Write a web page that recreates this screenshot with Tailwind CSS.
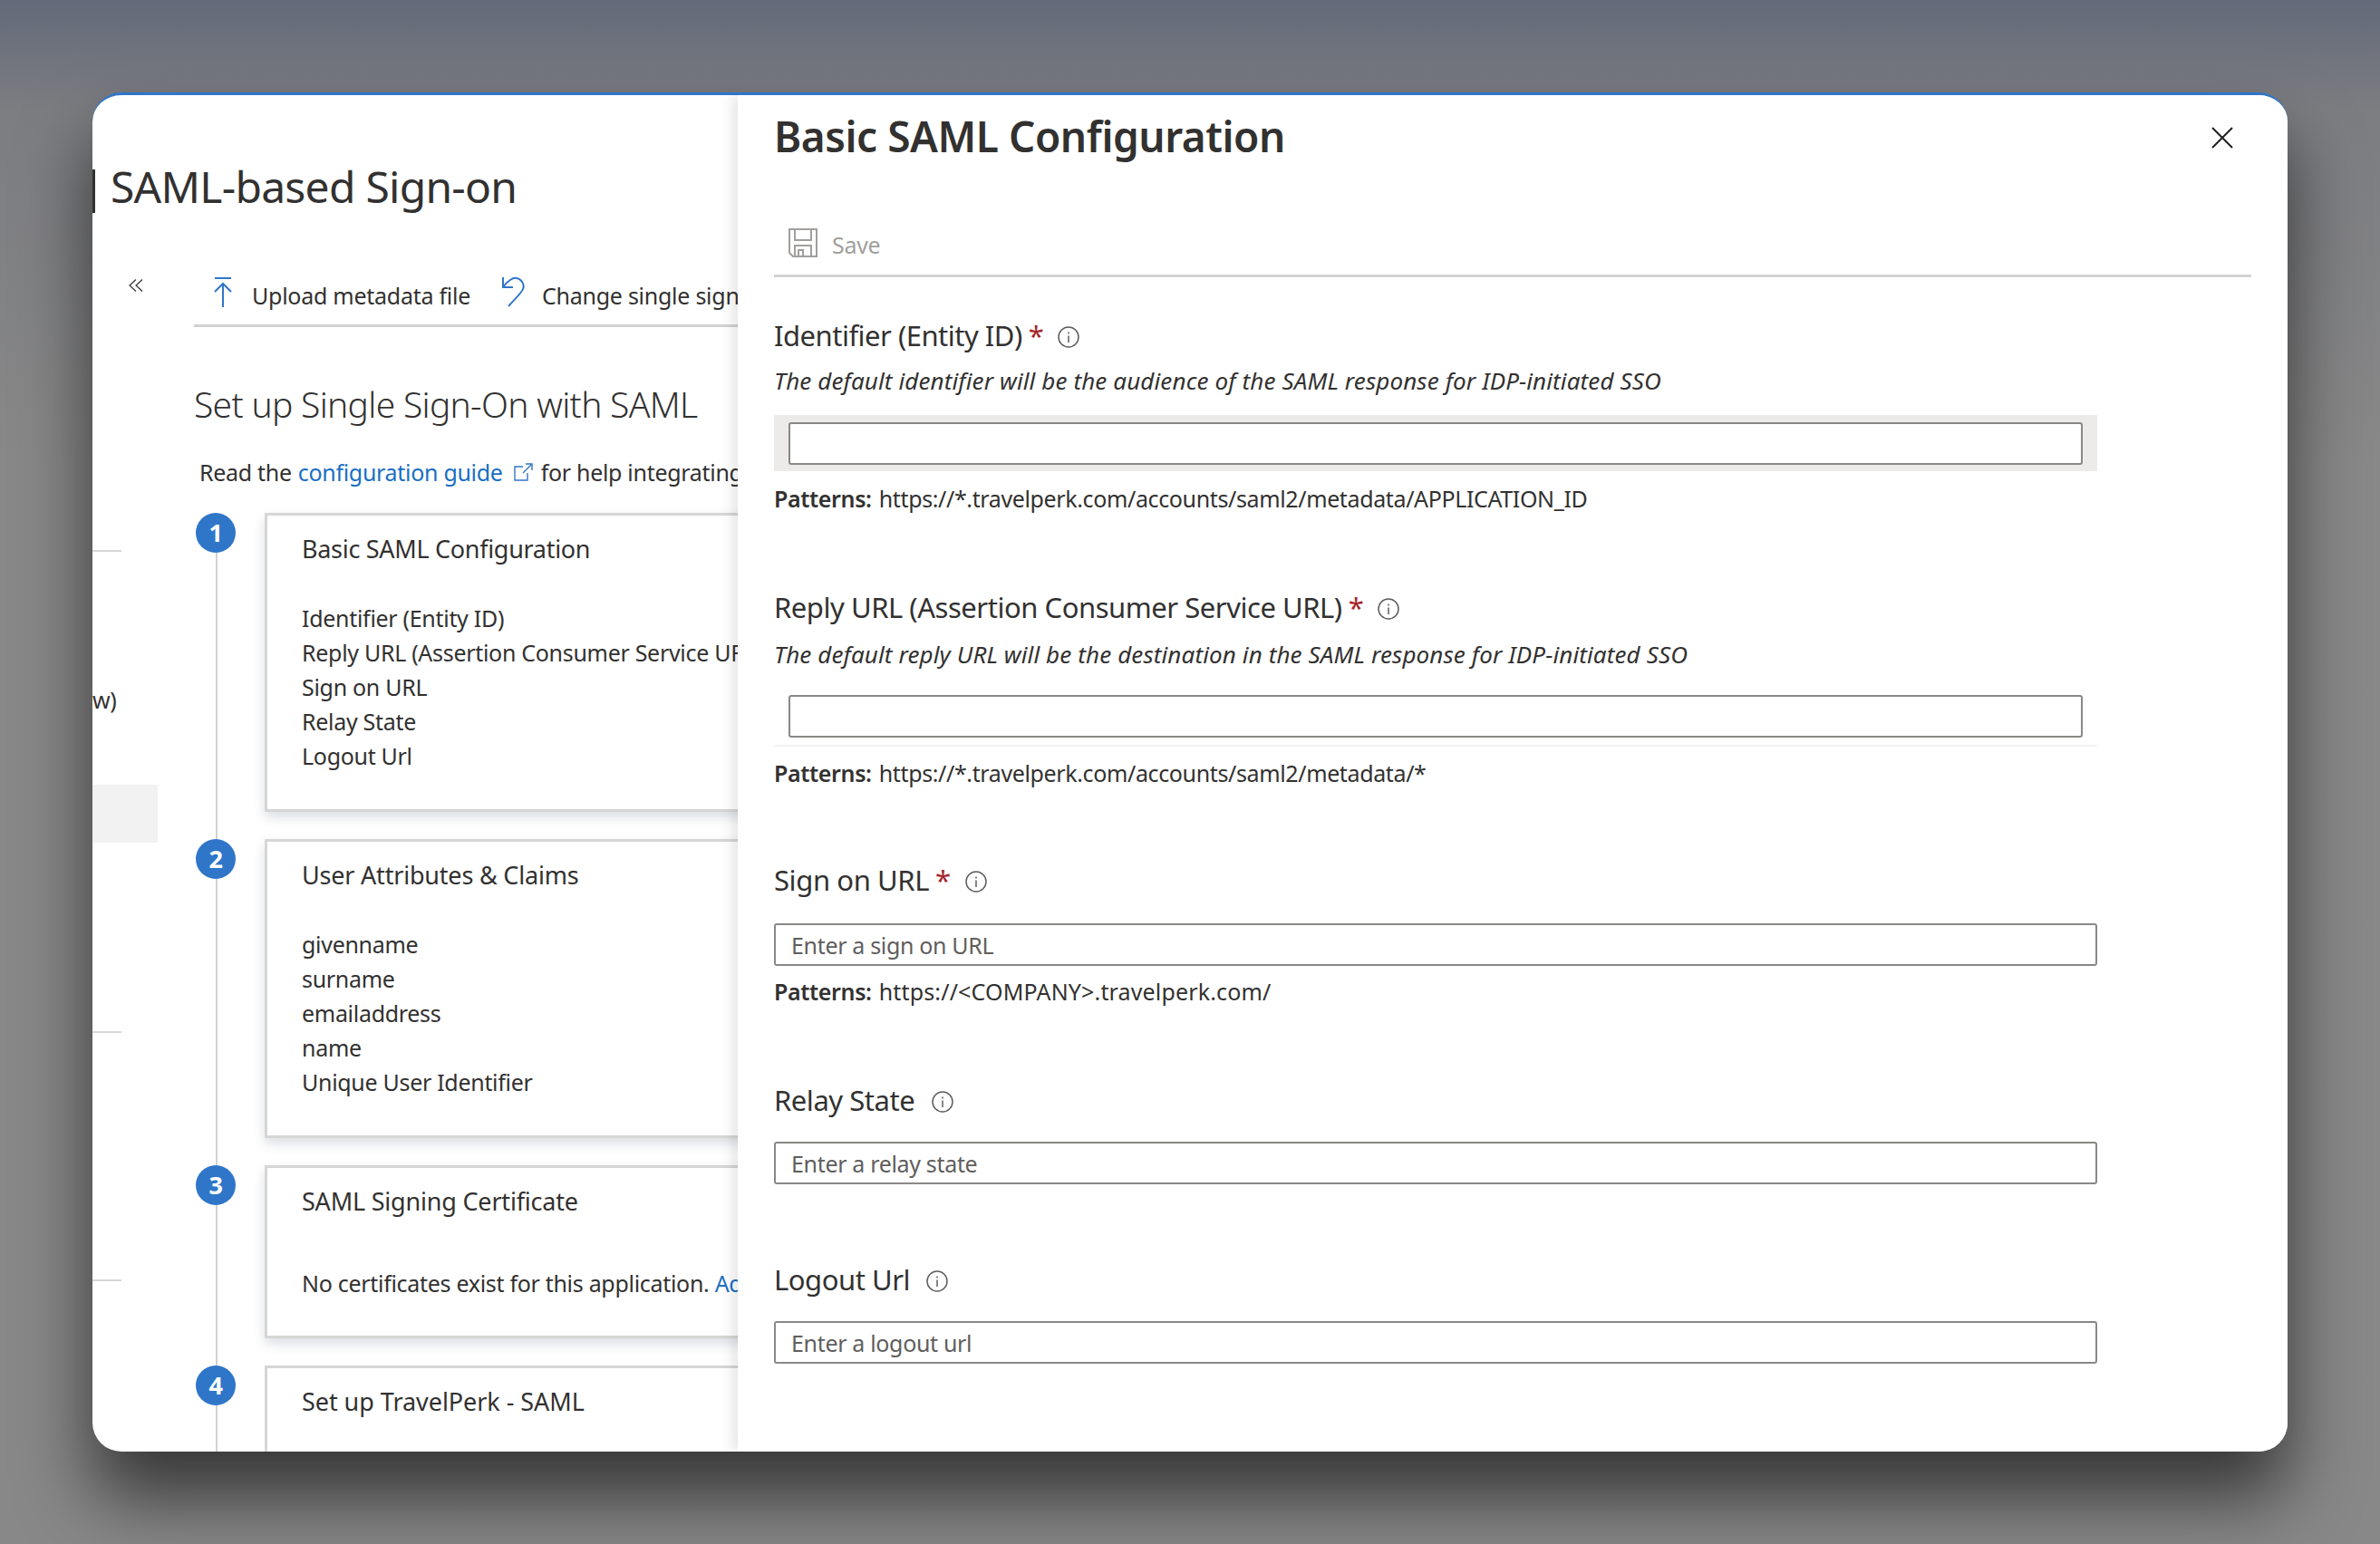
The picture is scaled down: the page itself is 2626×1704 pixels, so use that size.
<!DOCTYPE html>
<html lang="en">
<head>
  <meta charset="UTF-8">
  <title>Basic SAML Configuration</title>
  <script src="https://cdn.jsdelivr.net/npm/@tailwindcss/browser@4"></script>
</head>
<body class="m-0 font-['Noto_Sans',sans-serif] text-[#323130]">
  <div class="h-[1704px] w-[2626px] overflow-hidden bg-linear-to-b from-[#646a7a] from-0% via-[#7c7d81] via-[7%] to-[#888888] to-[30%] pl-[102px] pt-[102px]">
    <div class="flex h-[1500px] w-[2422px] overflow-hidden rounded-[32px] border-t-[3px] border-[#2f76c9] bg-white shadow-[0_50px_80px_rgba(0,0,0,0.6)]">

      <!-- left blade, runs under the right one -->
      <div class="w-[712px] shrink-0 overflow-hidden">
        <div class="flex h-[133px] items-start pt-[82px]">
          <div class="h-12 w-[3px] shrink-0 bg-[#323130]"></div>
          <h1 class="ml-[17px] -mt-[13px] text-[48px] leading-[64px] tracking-[-0.75px] font-normal whitespace-nowrap">SAML-based Sign-on</h1>
        </div>
        <div class="flex">
          <!-- sidebar leftovers -->
          <div class="w-[112px] shrink-0">
            <div class="flex h-[82px] items-start justify-end pr-[56px] pt-[70px]">
              <svg class="shrink-0" width="16" height="14" viewBox="0 0 16 14" fill="none" stroke="#323130" stroke-width="1.2"><path d="M8 0.5 1 7l7 6.5M15 0.5 8 7l7 6.5"/></svg>
            </div>
            <div class="mt-[287px] h-[2px] w-[32px] bg-[#d6d6d6]"></div>
            <div class="mt-[145px] text-[25px] leading-[36px] tracking-[-0.3px]">w)</div>
            <div class="mt-[76px] h-[64px] w-[72px] bg-[#f2f2f2]"></div>
            <div class="mt-[208px] h-[2px] w-[32px] bg-[#d6d6d6]"></div>
            <div class="mt-[272px] h-[2px] w-[32px] bg-[#d6d6d6]"></div>
          </div>

          <div class="w-[600px] shrink-0 pt-[54px]">
            <!-- toolbar -->
            <div class="flex h-[69px] w-[640px] items-start border-b-[3px] border-[#d2d2d2] pl-[22px] pt-[14px] text-[25px] leading-[40px] tracking-[-0.26px] whitespace-nowrap">
              <svg class="mt-[-1px] shrink-0" width="20" height="34" viewBox="0 0 20 34" fill="none" stroke="#2f76c9" stroke-width="2"><path d="M1 2h18M10 34V8M1 17l9-9 9 9"/></svg>
              <span class="ml-[22px]">Upload metadata file</span>
              <svg class="ml-[34px] mt-[-1px] shrink-0" width="26" height="34" viewBox="0 0 26 34" fill="none" stroke="#2f76c9" stroke-width="2"><path d="M2 1v11h11M2 12C7 5 13 1 17 2c6 1 9 8 7 12-2 5-9 11-16 19"/></svg>
              <span class="ml-[19px]">Change single sign</span>
            </div>
            <h2 class="mt-[55px] text-[39px] leading-[60px] tracking-[-0.7px] font-light whitespace-nowrap">Set up Single Sign-On with SAML</h2>
            <div class="mt-[26px] flex w-[700px] items-center pl-[6px] text-[25px] leading-[38px] tracking-[-0.3px] whitespace-nowrap">
              <span>Read the</span>
              <span class="ml-[7px] text-[#1a6fc4]">configuration guide</span>
              <svg class="ml-[11px] shrink-0" width="22" height="20" viewBox="0 0 22 20" fill="none" stroke="#2f76c9" stroke-width="1.4"><path d="M11 4H2v15h14v-8M11 11 20 2M14 1h7v7"/></svg>
              <span class="ml-[9px]">for help integrating</span>
            </div>

            <!-- steps -->
            <div class="relative mt-[26px] flex flex-col gap-[30px] text-[25px] leading-[38px] tracking-[-0.3px]">
              <div class="absolute left-[24px] top-[10px] h-[1100px] w-[2px] bg-[#d2d2d2]"></div>
              <div class="relative flex items-start">
                <div class="ml-[2px] flex h-[44px] w-[44px] shrink-0 items-center justify-center rounded-full bg-[#2f76c9] text-[27px] font-bold text-white">1</div>
                <div class="ml-[32px] h-[330px] w-[560px] shrink-0 border-[3px] border-[#d6d6d6] bg-white pl-[38px] pt-[18px] whitespace-nowrap shadow-[0_6px_12px_rgba(60,70,100,0.18)]">
                  <div class="text-[27px] tracking-[-0.3px]">Basic SAML Configuration</div>
                  <div class="mt-[38px]">Identifier (Entity ID)</div>
                  <div>Reply URL (Assertion Consumer Service URL)</div>
                  <div>Sign on URL</div>
                  <div>Relay State</div>
                  <div>Logout Url</div>
                </div>
              </div>
              <div class="relative flex items-start">
                <div class="ml-[2px] flex h-[44px] w-[44px] shrink-0 items-center justify-center rounded-full bg-[#2f76c9] text-[27px] font-bold text-white">2</div>
                <div class="ml-[32px] h-[330px] w-[560px] shrink-0 border-[3px] border-[#d6d6d6] bg-white pl-[38px] pt-[18px] whitespace-nowrap shadow-[0_6px_12px_rgba(60,70,100,0.18)]">
                  <div class="text-[27px] tracking-[-0.2px]">User Attributes &amp; Claims</div>
                  <div class="mt-[38px]">givenname</div>
                  <div>surname</div>
                  <div>emailaddress</div>
                  <div>name</div>
                  <div>Unique User Identifier</div>
                </div>
              </div>
              <div class="relative flex items-start">
                <div class="ml-[2px] flex h-[44px] w-[44px] shrink-0 items-center justify-center rounded-full bg-[#2f76c9] text-[27px] font-bold text-white">3</div>
                <div class="ml-[32px] h-[191px] w-[560px] shrink-0 border-[3px] border-[#d6d6d6] bg-white pl-[38px] pt-[18px] whitespace-nowrap shadow-[0_6px_12px_rgba(60,70,100,0.18)]">
                  <div class="text-[27px] tracking-[-0.2px]">SAML Signing Certificate</div>
                  <div class="mt-[52px]">No certificates exist for this application. <span class="text-[#1a6fc4]">Add</span></div>
                </div>
              </div>
              <div class="relative flex items-start">
                <div class="ml-[2px] flex h-[44px] w-[44px] shrink-0 items-center justify-center rounded-full bg-[#2f76c9] text-[27px] font-bold text-white">4</div>
                <div class="ml-[32px] h-[191px] w-[560px] shrink-0 border-[3px] border-[#d6d6d6] bg-white pl-[38px] pt-[18px] whitespace-nowrap">
                  <div class="text-[27px] tracking-[-0.05px]">Set up TravelPerk - SAML</div>
                </div>
              </div>
            </div>
          </div>
        </div>
      </div>

      <!-- right blade -->
      <div class="relative z-10 w-[1710px] shrink-0 bg-white pl-[40px] shadow-[-6px_0_14px_rgba(0,0,0,0.1)]">
        <div class="flex h-[95px] items-start pt-[13px]">
          <h2 class="text-[46px] leading-[64px] tracking-[-0.45px] font-semibold whitespace-nowrap">Basic SAML Configuration</h2>
          <svg class="ml-[1022px] mt-[22px] shrink-0" width="24" height="24" viewBox="0 0 24 24" fill="none" stroke="#201f1e" stroke-width="2"><path d="M1 1l22 22M23 1 1 23"/></svg>
        </div>

        <div class="flex h-[106px] w-[1630px] items-start border-b-[3px] border-[#d2d2d2] pl-[16px] pt-[52px]">
          <svg class="shrink-0" width="32" height="32" viewBox="0 0 32 32" fill="none" stroke="#a19f9d" stroke-width="2"><path d="M1 1h30v30H5l-4-4zM7 1v12h18V1M7 31V19h18v12M11 31v-7h5v7"/></svg>
          <span class="ml-[16px] text-[25px] leading-[36px] tracking-[-0.3px] text-[#a19f9d]">Save</span>
        </div>

        <!-- Identifier -->
        <div class="mt-[42px] flex h-[44px] items-center text-[31px] leading-[44px] tracking-[-0.5px] whitespace-nowrap">
          <span>Identifier (Entity ID)</span>
          <span class="ml-[7px] text-[#a4262c]">*</span>
          <svg class="ml-[16px] mt-[3px] shrink-0" width="24" height="24" viewBox="0 0 24 24" fill="none" stroke="#605e5c" stroke-width="1.5"><circle cx="12" cy="12" r="11"/><path d="M12 10.5V18M12 6.5v2"/></svg>
        </div>
        <p class="mt-[9px] text-[26px] leading-[38px] tracking-[0.12px] italic whitespace-nowrap">The default identifier will be the audience of the SAML response for IDP-initiated SSO</p>
        <div class="mt-[19px] h-[62px] w-[1460px] bg-[#ecebe9] px-[16px] py-[8px]">
          <input type="text" class="block h-[47px] w-full rounded-[3px] border-2 border-[#8a8886] bg-white px-[16px] text-[25px] outline-none">
        </div>
        <p class="mt-[11px] text-[25px] leading-[38px] tracking-[-0.37px] whitespace-nowrap"><b class="mr-[2px] font-semibold">Patterns:</b> https://*.travelperk.com/accounts/saml2/metadata/APPLICATION_ID</p>

        <!-- Reply URL -->
        <div class="mt-[79px] flex h-[44px] items-center text-[31px] leading-[44px] tracking-[-0.46px] whitespace-nowrap">
          <span>Reply URL (Assertion Consumer Service URL)</span>
          <span class="ml-[7px] text-[#a4262c]">*</span>
          <svg class="ml-[16px] mt-[3px] shrink-0" width="24" height="24" viewBox="0 0 24 24" fill="none" stroke="#605e5c" stroke-width="1.5"><circle cx="12" cy="12" r="11"/><path d="M12 10.5V18M12 6.5v2"/></svg>
        </div>
        <p class="mt-[11px] text-[26px] leading-[38px] tracking-[0.12px] italic whitespace-nowrap">The default reply URL will be the destination in the SAML response for IDP-initiated SSO</p>
        <div class="mt-[26px] h-[57px] w-[1460px] border-b-[2px] border-[#f3f2f1] px-[16px]">
          <input type="text" class="block h-[47px] w-full rounded-[3px] border-2 border-[#8a8886] bg-white px-[16px] text-[25px] outline-none">
        </div>
        <p class="mt-[10px] text-[25px] leading-[38px] tracking-[-0.37px] whitespace-nowrap"><b class="mr-[2px] font-semibold">Patterns:</b> https://*.travelperk.com/accounts/saml2/metadata/*</p>

        <!-- Sign on URL -->
        <div class="mt-[77px] flex h-[44px] items-center text-[31px] leading-[44px] tracking-[-0.4px] whitespace-nowrap">
          <span>Sign on URL</span>
          <span class="ml-[7px] text-[#a4262c]">*</span>
          <svg class="ml-[16px] mt-[3px] shrink-0" width="24" height="24" viewBox="0 0 24 24" fill="none" stroke="#605e5c" stroke-width="1.5"><circle cx="12" cy="12" r="11"/><path d="M12 10.5V18M12 6.5v2"/></svg>
        </div>
        <input type="text" placeholder="Enter a sign on URL" class="mt-[26px] block h-[47px] w-[1460px] rounded-[3px] border-2 border-[#8a8886] bg-white px-[17px] text-[25px] tracking-[-0.33px] outline-none placeholder:text-[#605e5c]">
        <p class="mt-[9px] text-[25px] leading-[38px] tracking-[-0.37px] whitespace-nowrap"><b class="mr-[2px] font-semibold">Patterns:</b> <span class="tracking-[0.15px]">https://&lt;COMPANY&gt;.travelperk.com/</span></p>

        <!-- Relay State -->
        <div class="mt-[79px] flex h-[44px] items-center text-[31px] leading-[44px] tracking-[-0.46px] whitespace-nowrap">
          <span>Relay State</span>
          <svg class="ml-[19px] mt-[3px] shrink-0" width="24" height="24" viewBox="0 0 24 24" fill="none" stroke="#605e5c" stroke-width="1.5"><circle cx="12" cy="12" r="11"/><path d="M12 10.5V18M12 6.5v2"/></svg>
        </div>
        <input type="text" placeholder="Enter a relay state" class="mt-[24px] block h-[47px] w-[1460px] rounded-[3px] border-2 border-[#8a8886] bg-white px-[17px] text-[25px] tracking-[-0.33px] outline-none placeholder:text-[#605e5c]">

        <!-- Logout Url -->
        <div class="mt-[83px] flex h-[44px] items-center text-[31px] leading-[44px] tracking-[-0.46px] whitespace-nowrap">
          <span>Logout Url</span>
          <svg class="ml-[18px] mt-[3px] shrink-0" width="24" height="24" viewBox="0 0 24 24" fill="none" stroke="#605e5c" stroke-width="1.5"><circle cx="12" cy="12" r="11"/><path d="M12 10.5V18M12 6.5v2"/></svg>
        </div>
        <input type="text" placeholder="Enter a logout url" class="mt-[24px] block h-[47px] w-[1460px] rounded-[3px] border-2 border-[#8a8886] bg-white px-[17px] text-[25px] tracking-[-0.33px] outline-none placeholder:text-[#605e5c]">
      </div>
    </div>
  </div>
</body>
</html>
